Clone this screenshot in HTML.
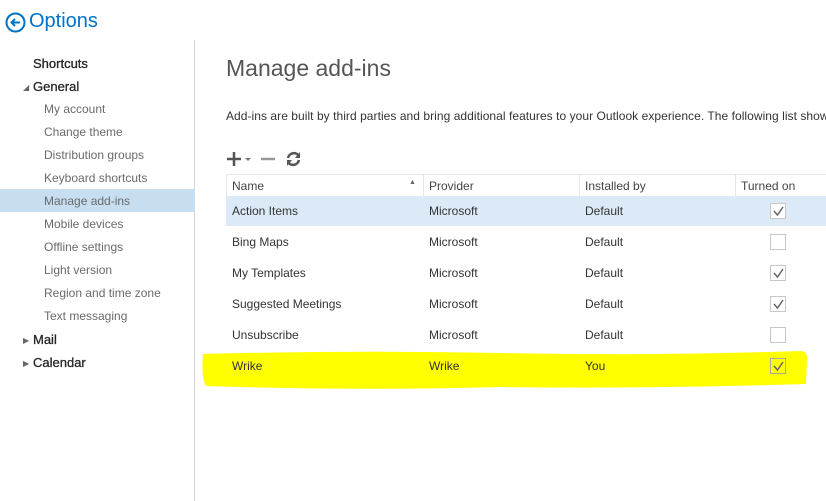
<!DOCTYPE html>
<html><head><meta charset="utf-8"><style>
*{margin:0;padding:0;box-sizing:border-box}
body{width:826px;height:501px;overflow:hidden;background:#fff;font-family:"Liberation Sans",sans-serif;position:relative}
.a{position:absolute;white-space:nowrap}
.side{position:absolute;left:0;top:40px;width:195px;height:461px;border-right:1px solid #d4d4d4}
.h{font-size:13px;color:#262626;font-weight:normal;-webkit-text-stroke:0.3px #262626}
.s{font-size:12px;color:#6a6a6a;left:44px}
.tri{font-size:8px;color:#666}
.th{font-size:12px;color:#444;top:179px}
.td{font-size:12px;color:#333}
.cb{position:absolute;left:770px;width:16px;height:16px;border:1px solid #c8c8c8;background:#fff}
.cb svg{position:absolute;left:1px;top:1px}
</style></head><body>
<svg class="a" style="left:5px;top:12px" width="21" height="21" viewBox="0 0 21 21"><circle cx="10.5" cy="10.5" r="9" fill="none" stroke="#0072c6" stroke-width="2"/><path d="M15 10.5H6.5M10 7l-3.5 3.5L10 14" fill="none" stroke="#0072c6" stroke-width="2"/></svg>
<div class="a" style="left:29px;top:10px;font-size:20px;color:#0072c6">Options</div>
<div class="side"></div>
<div class="a" style="left:0;top:189px;width:195px;height:23px;background:#c7def1"></div>
<div class="a h" style="left:33px;top:56px">Shortcuts</div>
<div class="a tri" style="left:23px;top:83px">◢</div>
<div class="a h" style="left:33px;top:79px">General</div>
<div class="a s" style="top:102px">My account</div>
<div class="a s" style="top:125px">Change theme</div>
<div class="a s" style="top:148px">Distribution groups</div>
<div class="a s" style="top:171px">Keyboard shortcuts</div>
<div class="a s" style="top:194px">Manage add-ins</div>
<div class="a s" style="top:217px">Mobile devices</div>
<div class="a s" style="top:240px">Offline settings</div>
<div class="a s" style="top:263px">Light version</div>
<div class="a s" style="top:286px">Region and time zone</div>
<div class="a s" style="top:309px">Text messaging</div>
<div class="a tri" style="left:23px;top:336px">▶</div>
<div class="a h" style="left:33px;top:332px">Mail</div>
<div class="a tri" style="left:23px;top:359px">▶</div>
<div class="a h" style="left:33px;top:355px">Calendar</div>

<div class="a" style="left:226px;top:55px;font-size:23px;color:#555;font-weight:normal">Manage add-ins</div>
<div class="a" style="left:226px;top:109px;font-size:12px;color:#333;letter-spacing:0.05px">Add-ins are built by third parties and bring additional features to your Outlook experience. The following list shows</div>

<svg class="a" style="left:226px;top:151px" width="80" height="16" viewBox="0 0 80 16"><path d="M8 1v14M1 8h14" stroke="#555" stroke-width="2.5"/><path d="M19 7l3 3 3-3z" fill="#777"/><path d="M35 8h14" stroke="#999" stroke-width="2.5"/><path d="M73 5a6 6 0 0 0-11 2M62 11a6 6 0 0 0 11-2" fill="none" stroke="#555" stroke-width="2.5"/><path d="M74 1v6h-5z M61 15v-6h5z" fill="#555"/></svg>

<div class="a" style="left:226px;top:174px;width:600px;height:1px;background:#e6e6e6"></div>
<div class="a" style="left:226px;top:174px;width:1px;height:22px;background:#e6e6e6"></div>
<div class="a" style="left:423px;top:174px;width:1px;height:22px;background:#e6e6e6"></div>
<div class="a" style="left:579px;top:174px;width:1px;height:22px;background:#e6e6e6"></div>
<div class="a" style="left:735px;top:174px;width:1px;height:22px;background:#e6e6e6"></div>
<div class="a th" style="left:232px">Name</div>
<div class="a" style="left:409px;top:179px;font-size:7px;color:#666">▲</div>
<div class="a th" style="left:429px">Provider</div>
<div class="a th" style="left:585px">Installed by</div>
<div class="a th" style="left:741px">Turned on</div>
<div class="a" style="left:226px;top:196px;width:600px;height:30px;background:#dce9f6"></div>

<svg class="a" style="left:200px;top:348px" width="612" height="44" viewBox="0 0 612 44"><path d="M3 6 Q150 2 300 5 Q450 8 600 3 Q608 3 607 12 L606 36 Q450 41 300 39 Q150 43 6 38 Q1 30 3 6z" fill="#ffff00"/></svg>

<div class="a td" style="left:232px;top:204px">Action Items</div><div class="a td" style="left:429px;top:204px">Microsoft</div><div class="a td" style="left:585px;top:204px">Default</div>
<div class="a td" style="left:232px;top:235px">Bing Maps</div><div class="a td" style="left:429px;top:235px">Microsoft</div><div class="a td" style="left:585px;top:235px">Default</div>
<div class="a td" style="left:232px;top:266px">My Templates</div><div class="a td" style="left:429px;top:266px">Microsoft</div><div class="a td" style="left:585px;top:266px">Default</div>
<div class="a td" style="left:232px;top:297px">Suggested Meetings</div><div class="a td" style="left:429px;top:297px">Microsoft</div><div class="a td" style="left:585px;top:297px">Default</div>
<div class="a td" style="left:232px;top:328px">Unsubscribe</div><div class="a td" style="left:429px;top:328px">Microsoft</div><div class="a td" style="left:585px;top:328px">Default</div>
<div class="a td" style="left:232px;top:359px">Wrike</div><div class="a td" style="left:429px;top:359px">Wrike</div><div class="a td" style="left:585px;top:359px">You</div>

<div class="cb" style="top:203px"><svg width="13" height="13"><path d="M2 6l3.5 4L11 2" fill="none" stroke="#666" stroke-width="1.5"/></svg></div>
<div class="cb" style="top:234px"></div>
<div class="cb" style="top:265px"><svg width="13" height="13"><path d="M2 6l3.5 4L11 2" fill="none" stroke="#666" stroke-width="1.5"/></svg></div>
<div class="cb" style="top:296px"><svg width="13" height="13"><path d="M2 6l3.5 4L11 2" fill="none" stroke="#666" stroke-width="1.5"/></svg></div>
<div class="cb" style="top:327px"></div>
<div class="cb" style="top:358px;background:transparent;border-color:#aa9"><svg width="13" height="13"><path d="M2 6l3.5 4L11 2" fill="none" stroke="#666" stroke-width="1.5"/></svg></div>
</body></html>
